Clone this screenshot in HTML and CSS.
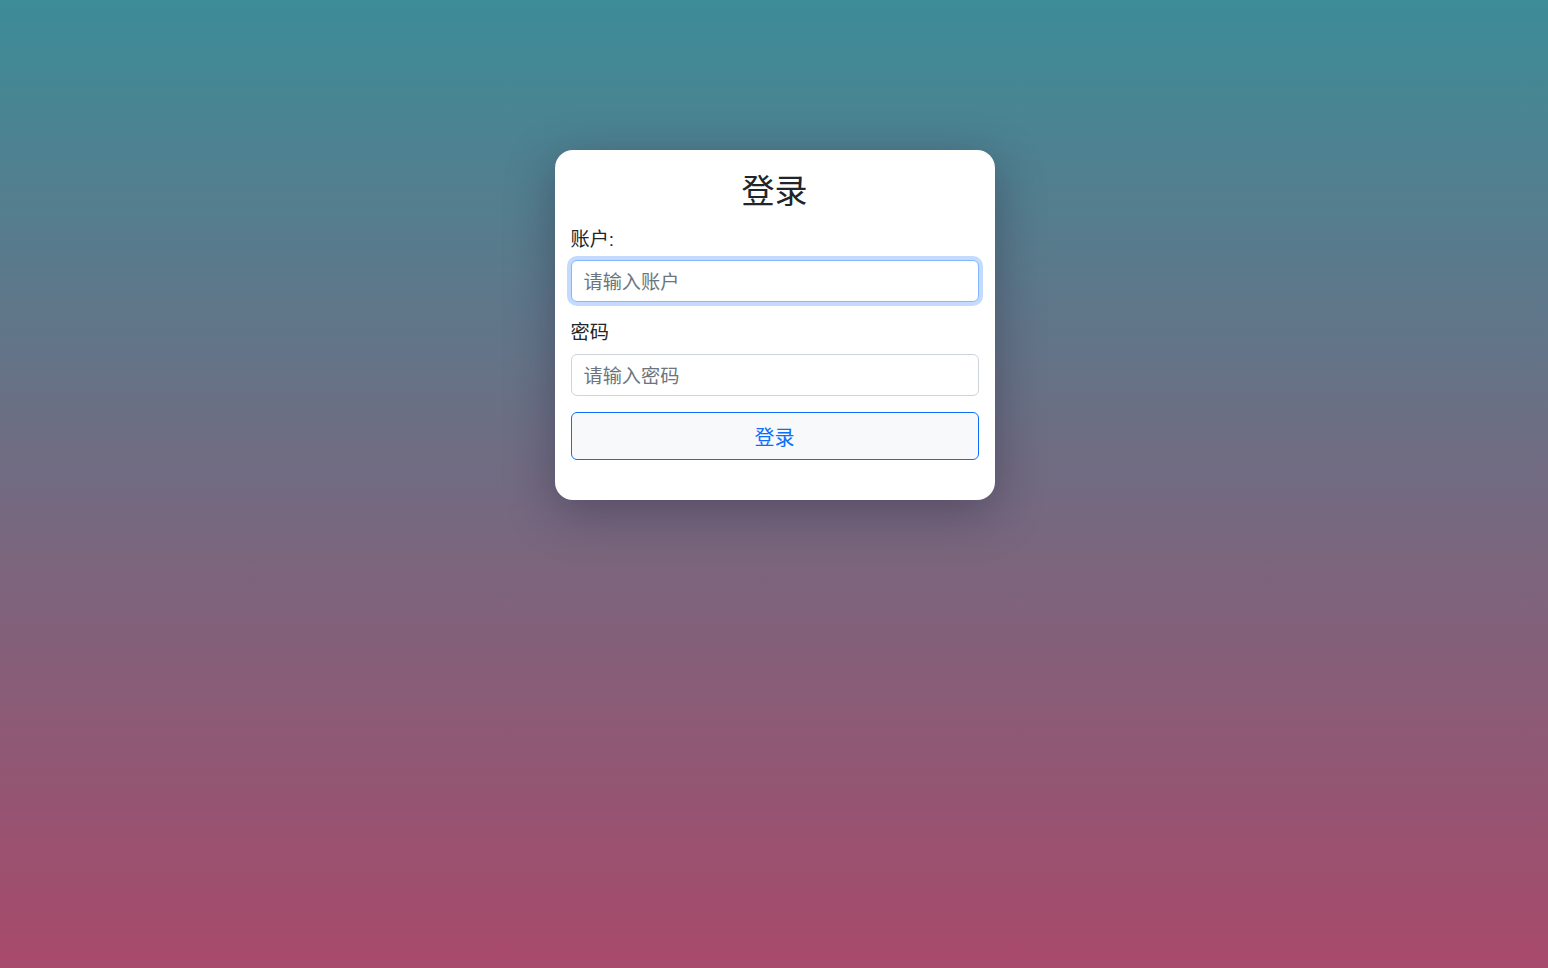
FILE: index.html
```html
<!DOCTYPE html>
<html lang="zh">
<head>
<meta charset="utf-8">
<title>登录</title>
<link rel="stylesheet" href="styles.css">
</head>
<body>
<main class="page">
  <form class="card">
    <h2 class="title">登录</h2>
    <div class="group">
      <label class="label" for="acc">账户:</label>
      <input class="input focused" id="acc" type="text" placeholder="请输入账户" autofocus>
    </div>
    <div class="group">
      <label class="label" for="pwd">密码</label>
      <input class="input" id="pwd" type="password" placeholder="请输入密码">
    </div>
    <button class="btn" type="button">登录</button>
  </form>
</main>
</body>
</html>
```
FILE: styles.css
```css
* { box-sizing: border-box; }
html, body { margin: 0; height: 100%; }
body {
  font-family: "Liberation Sans", "Noto Sans CJK SC", sans-serif;
  color: #212529;
  background: linear-gradient(to bottom, #3d8c98, #a8496a);
}
.page {
  min-height: 100%;
  display: flex;
  justify-content: center;
  align-items: flex-start;
  padding-top: 150px;
  padding-left: 1px;
}
.card {
  width: 440px;
  background: #fff;
  border-radius: 18px;
  padding: 23px 16px 40px;
  box-shadow: 0 12px 48px rgba(30, 20, 50, 0.35);
  display: flex;
  flex-direction: column;
}
.title {
  margin: 0 0 13px;
  font-size: 33px;
  font-weight: 400;
  line-height: 38px;
  text-align: center;
}
.group {
  display: flex;
  flex-direction: column;
  margin-bottom: 16px;
}
.label {
  font-size: 19.2px;
  line-height: 27px;
  padding-top: 2px;
  margin-bottom: 7px;
}
.group + .group .label {
  padding-top: 1px;
  margin-bottom: 8px;
}
.input {
  height: 42px;
  padding: 8px 12px 4px;
  font-size: 19.2px;
  font-family: inherit;
  color: #212529;
  border: 1px solid #ced4da;
  border-radius: 6px;
  outline: none;
}
.input::placeholder { color: #6c757d; }
.input:focus, .input.focused {
  border-color: #86b7fe;
  box-shadow: 0 0 0 4px rgba(13, 110, 253, 0.25);
}
.btn {
  height: 48px;
  font-size: 20px;
  font-family: inherit;
  color: #0d6efd;
  background: #f8f9fa;
  border: 1px solid #0d6efd;
  border-radius: 6px;
  cursor: pointer;
}
```
